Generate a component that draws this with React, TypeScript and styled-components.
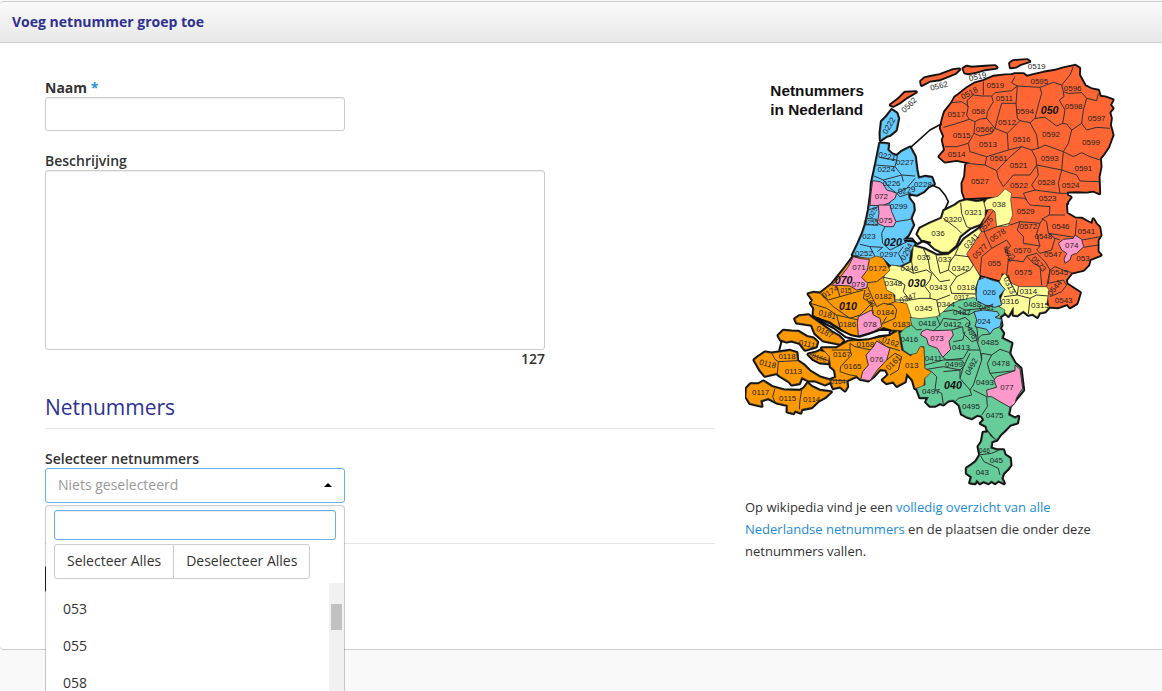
import React from "react";
import styled, { createGlobalStyle } from "styled-components";

const GlobalStyle = createGlobalStyle`
  * { box-sizing: border-box; }
  body {
    margin: 0;
    background: #f9f9f9;
    color: #333;
    font-family: "Open Sans", "Noto Sans", sans-serif;
    font-size: 14px;
    line-height: 20px;
  }
  button, input, textarea { font: inherit; color: inherit; }
`;

const Page = styled.main`
  min-height: 100vh;
  padding-top: 1px;
  overflow: hidden;
`;

const Panel = styled.section`
  min-height: 649px;
  background: #fff;
  border: solid #ccc;
  border-width: 1px 0;
  border-radius: 4px 0 0 4px;
`;

const PanelHeader = styled.header`
  padding: 10px 12px;
  background: linear-gradient(#fafafa, #e8e8e8);
  border-bottom: 1px solid #ccc;
  border-radius: 4px 0 0 0;
`;

const PanelTitle = styled.h1`
  margin: 0;
  font-size: 14px;
  line-height: 20px;
  font-weight: 700;
  color: #2e3192;
`;

const PanelBody = styled.div`
  display: grid;
  grid-template-columns: minmax(0, 670fr) minmax(0, 370fr);
  gap: 30px;
  padding: 11px 47px 0 45px;
`;

const Form = styled.form`
  padding-top: 24px;
`;

const Field = styled.div<{ $gap?: number }>`
  position: relative;
  display: flex;
  flex-direction: column;
  align-items: flex-start;
  margin-bottom: ${(p) => p.$gap ?? 0}px;
`;

const Label = styled.label<{ $strong?: boolean }>`
  height: 19px;
  font-weight: ${(p) => (p.$strong ? 700 : 600)};
`;

const Required = styled.span`
  color: #1c94e0;
`;

const TextInput = styled.input<{ $focused?: boolean }>`
  display: block;
  width: 100%;
  max-width: 300px;
  height: ${(p) => (p.$focused ? 30 : 34)}px;
  padding: 4px 12px;
  background: #fff;
  border: 1px solid ${(p) => (p.$focused ? "#66afe9" : "#ccc")};
  border-radius: 3px;
  box-shadow: inset 0 1px 1px rgba(0, 0, 0, 0.075);
  outline: none;
`;

const TextArea = styled.textarea`
  display: block;
  width: 100%;
  max-width: 500px;
  height: 180px;
  padding: 6px 12px;
  border: 1px solid #ccc;
  border-radius: 3px;
  box-shadow: inset 0 1px 1px rgba(0, 0, 0, 0.075);
  resize: none;
  outline: none;
`;

const Counter = styled.output`
  width: 100%;
  max-width: 500px;
  line-height: 18px;
  text-align: right;
  font-weight: 600;
`;

const SectionTitle = styled.h2`
  margin: 0 0 20px;
  padding-bottom: 7px;
  border-bottom: 1px solid #e5e5e5;
  font-size: 21px;
  line-height: 28px;
  font-weight: 400;
  color: #2e3192;
`;

const Picker = styled.button`
  display: flex;
  align-items: center;
  justify-content: space-between;
  width: 100%;
  max-width: 300px;
  height: 35px;
  padding: 0 12px 2px;
  background: #fff;
  border: 1px solid #66afe9;
  border-radius: 3px;
  color: #999;
  text-align: left;
`;

const Caret = styled.span`
  border: 4px solid transparent;
  border-top: 0;
  border-bottom-color: #000;
`;

const Menu = styled.div`
  position: absolute;
  top: 100%;
  left: 0;
  z-index: 2;
  width: 100%;
  max-width: 300px;
  margin-top: 2px;
  padding-top: 4px;
  background: #fff;
  background-clip: padding-box;
  border: 1px solid rgba(0, 0, 0, 0.2);
  border-radius: 4px;
  box-shadow: inset 0 3px 3px rgba(0, 0, 0, 0.04);
`;

const MenuTools = styled.div`
  padding: 0 8px 4px;
`;

const ButtonGroup = styled.div`
  display: flex;
  margin-top: 4px;
`;

const GroupButton = styled.button`
  height: 35px;
  padding: 0 12px 2px;
  background: #fff;
  border: 1px solid #ccc;
  &:first-child { border-radius: 3px 0 0 3px; }
  &:last-child { margin-left: -1px; border-radius: 0 3px 3px 0; }
`;

const ListArea = styled.div`
  display: flex;
`;

const Options = styled.ul`
  flex: 1;
  margin: 0;
  padding: 7px 0;
  list-style: none;
`;

const Option = styled.li`
  padding: 9px 17px 8px;
`;

const Track = styled.div`
  width: 15px;
  padding: 21px 2px;
  background: #f1f1f1;
`;

const Thumb = styled.div`
  height: 26px;
  background: #c1c1c1;
`;

const Divider = styled.hr`
  width: 100%;
  margin: 40px 0 21px;
  border: 0;
  border-top: 1px solid #e5e5e5;
`;

const SubmitButton = styled.button`
  height: 28px;
  padding: 0 12px;
  background: #1b1464;
  border: 1px solid #1b1464;
  border-radius: 3px;
  color: #fff;
`;

const Aside = styled.aside`
  min-width: 0;
`;

const Map = styled.svg`
  display: block;
  width: 100%;
  height: auto;
`;

const Note = styled.p`
  margin: 8px 0 0;
  font-size: 13px;
  line-height: 22px;
`;

const Link = styled.a`
  color: #1c8bd6;
  text-decoration: none;
`;

const RED = "#ff6633";
const BLUE = "#66ccff";
const PINK = "#ff99cc";
const YELLOW = "#ffff99";
const ORANGE = "#ff9900";
const GREEN = "#66cc99";

type Sheet = {
  x: number;
  y: number;
  land: [string, string][];
  zones: [string, string][];
  borders: string;
  labels: [string, number, number, number?][];
  hubs?: [string, number, number][];
};

// Each sheet covers one part of the country, with its own origin.
const sheets: Sheet[] = [
  {
    // Noord-Holland and the western Wadden islands
    x: 0,
    y: 0,
    land: [
      [BLUE, "420,280 445,282 443,300 455,312 470,318 485,305 510,292 525,320 530,360 535,385 555,380 575,383 582,402 565,410 550,425 530,435 505,430 507,445 520,462 522,480 512,505 520,525 505,555 490,568 515,568 525,580 512,605 508,635 480,648 450,645 430,625 410,620 388,628 338,615 355,580 368,550 378,520 386,480 393,430 395,400 408,340"],
      [BLUE, "455,180 470,190 475,205 468,240 450,255 440,258 422,270 421,250 425,215 440,200"],
      [RED, "452,165 475,148 495,128 528,126 500,142 480,157 460,168"],
      [RED, "545,105 543,94 555,84 575,80 600,75 640,60 658,58 645,70 600,88 570,92"],
    ],
    zones: [
      [PINK, "398,392 420,395 430,402 440,420 458,425 470,430 465,445 445,460 425,467 390,466 393,430"],
      [PINK, "415,465 450,465 455,485 468,515 460,530 435,530 412,520 417,490"],
    ],
    borders:
      "M418 322L470 330L472 318M408 345L465 350L470 330M465 350L485 375L525 378M402 378L430 390L485 375L490 395M430 390L445 410L470 430L500 415L525 385M470 430L480 440L505 432M447 462L460 440M385 480L415 470M378 505L412 508M376 524L415 526M468 515L512 508M435 530L425 550L428 580L450 600L512 570M360 583L390 590L428 592M390 590L405 620M428 592L412 605M490 640L475 610L490 590",
    labels: [
      ["0222", 447, 227, -60], ["0562", 507, 165, -45], ["0562", 597, 108, -14], ["0227", 495, 338],
      ["0221", 441, 320, 14], ["0224", 439, 358], ["0226", 455, 401], ["0228", 549, 402],
      ["0229", 500, 421, -10], ["072", 424, 440], ["0299", 476, 469], ["025", 398, 487, -60],
      ["0255", 393, 516], ["075", 437, 511], ["023", 387, 560], ["0252", 372, 609], ["0297", 446, 612], ["0294", 500, 605, -62],
    ],
    hubs: [["020", 459, 577]],
  },
  {
    // Friesland, Groningen and Drenthe
    x: 570,
    y: 0,
    land: [
      [RED, "35,220 40,200 45,185 65,160 75,142 85,135 110,115 135,100 160,93 190,80 225,76 245,75 255,72 280,72 290,80 310,75 340,68 375,62 400,55 435,47 448,55 447,75 465,108 485,118 505,122 510,140 525,142 548,150 540,165 548,175 538,187 543,205 540,225 548,255 535,290 522,310 510,325 512,350 506,380 508,430 490,422 470,425 440,424 410,425 412,460 235,450 205,440 105,445 98,425 97,400 105,380 108,345 120,338 80,330 45,335 28,320 45,300 38,270 42,258 32,235"],
      [RED, "100,56 110,50 125,53 165,50 195,48 200,53 165,58 140,65 118,70 105,68"],
      [RED, "240,40 250,33 290,30 298,34 270,43 258,50 242,52"],
    ],
    zones: [],
    borders:
      "M65 158L95 155L115 168L110 195L118 208L75 222L40 232M112 170L112 150L130 135L155 138L185 138L195 128L245 122L262 108L245 98L255 80M160 95L160 135M185 138L190 155L172 185L170 205L195 235M118 208L135 215L150 207L170 205M135 215L132 250L150 258L185 250L195 235M132 250L115 280L80 290L45 290M115 280L120 305L170 320L235 300L232 250L195 235M262 108L258 160L215 160L205 195L195 235M258 160L262 205L270 212L232 250M262 108L330 112L335 130L325 165L315 205L300 218L270 212M330 112L370 97L395 105L420 75L430 50M395 105L400 125L415 130L455 128L470 145L500 152L505 130M400 125L402 140L388 150L405 180L398 220L380 228L345 202L315 205M470 145L460 180L455 220L425 240L410 222L398 220M455 220L470 240L500 232L540 235M425 240L415 280L400 305L345 285L325 295L320 255L300 218M400 305L430 320L455 308L480 320L510 330M235 300L275 290L305 300L325 295M305 300L318 325L320 345L300 375L250 375L220 410L205 385L200 362L165 345L170 320M200 362L235 325L275 290M165 345L108 340M320 345L395 360L400 305M395 360L385 400L390 430M395 360L440 375L450 393L508 395M320 345L325 375L305 405L315 420L280 430L290 450M315 420L390 430L412 430",
    labels: [
      ["0519", 143, 80, -12], ["0519", 320, 48], ["0519", 196, 107], ["0518", 118, 130, -28],
      ["0595", 328, 95], ["0596", 428, 114], ["0511", 223, 146], ["058", 145, 184], ["0517", 79, 193],
      ["0594", 285, 184], ["0598", 431, 168], ["0597", 500, 204], ["0512", 231, 216], ["0566", 164, 237],
      ["0515", 95, 256], ["0513", 174, 283], ["0516", 275, 267], ["0592", 363, 252], ["0599", 483, 276],
      ["0514", 80, 313], ["0561", 206, 325], ["0521", 266, 345], ["0593", 359, 324], ["0591", 460, 355],
      ["0527", 150, 395], ["0522", 267, 405], ["0528", 349, 397], ["0524", 422, 405],
    ],
    hubs: [["050", 359, 181]],
  },
  {
    // Overijssel, Gelderland, Flevoland and Utrecht
    x: 570,
    y: 420,
    land: [
      [RED, "235,-20 410,0 410,15 422,22 408,40 410,70 435,85 455,86 475,97 487,102 490,88 498,102 508,112 512,135 503,150 503,185 512,195 480,208 475,225 460,240 425,248 408,270 410,282 450,308 445,325 440,340 420,352 412,342 385,352 357,350 350,290 268,290 245,280 232,255 215,250 213,272 175,262 150,255 108,192 130,165 150,118 175,60 240,0"],
      [YELLOW, "162,40 170,28 205,18 215,8 225,-4 245,10 242,30 248,75 240,95 235,108 200,110 195,65 185,58 168,60"],
      [YELLOW, "-38,132 -30,115 0,100 35,85 42,62 75,46 90,35 110,30 140,35 160,32 166,55 165,80 150,103 120,114 90,138 78,166 55,186 35,186 15,176 -5,158 -25,150"],
      [YELLOW, "-50,168 -20,176 0,186 20,196 55,194 88,168 102,148 150,114 155,124 110,192 150,258 136,295 140,328 90,330 60,345 30,392 -55,390 -65,370 -85,345 -105,335 -105,315 -125,305 -145,290 -140,265 -130,240 -115,225 -85,230 -55,215"],
      [YELLOW, "225,250 245,280 268,290 350,290 357,300 350,345 360,348 345,365 328,368 322,381 308,372 295,375 280,363 262,376 250,375 250,352 235,378 222,365 205,345 222,300 208,275 215,258"],
    ],
    zones: [
      [BLUE, "140,290 145,270 165,262 190,272 205,275 225,298 208,318 215,345 195,352 165,345 140,332 138,315"],
      [PINK, "385,160 400,148 430,145 435,135 455,148 461,170 440,190 425,195 420,210 405,220 402,208 410,190 395,180"],
    ],
    borders:
      "M245 22L285 25L300 45L360 50L358 75L405 75M358 75L340 85L330 100L270 95L240 105M270 95L262 120L280 140L280 160L330 168L320 130L330 100M335 85L350 95L355 130L375 145L390 150M355 130L435 142L440 90M455 150L512 140M460 172L505 165M375 145L365 180L330 190L320 180L330 168M162 125L200 110L240 100M162 125L185 175L230 150L242 168L230 180L240 215M185 175L155 200L150 255M240 192L225 185L230 170M240 215L255 200L245 190M235 210L230 255M235 210L280 215L290 198L320 190L345 215L360 240L350 290M290 198L310 220L330 230L335 285M360 240L375 230L400 240L425 248M360 240L355 280L400 270M400 270L410 285L395 305L360 320M150 115L190 62M40 85L60 100L80 115L95 130M92 38L95 70L110 110L120 114M85 172L75 195L60 215L55 240L30 250L18 196M75 195L115 200L130 225L120 240L80 260L55 240M80 260L60 290L65 310L140 312M-140 262L-100 270L-75 285L-80 305L-60 330L-30 325L0 325L20 330L60 315M20 330L30 380M-20 176L-5 210L0 240L30 275L60 270M-85 230L-50 250L-10 240L5 250L0 270L-15 290L0 310L0 325M-55 215L-50 250M265 290L262 315L222 320M262 315L300 325L320 315L355 318M300 325L295 372M-105 330L-60 330M235 255L240 275L262 315",
    labels: [
      ["038", 207, 44], ["0523", 353, 24], ["0529", 287, 64], ["0321", 130, 68], ["0320", 69, 88],
      ["036", 24, 130], ["0525", 168, 104, -52], ["0572", 295, 109], ["0546", 392, 109], ["0541", 469, 125],
      ["0548", 340, 139], ["0578", 203, 136, -35], ["0341", 124, 153, -45], ["0577", 150, 184, -45],
      ["0570", 277, 180], ["074", 425, 166], ["0547", 369, 192], ["053", 459, 205], ["033", 44, 207],
      ["0342", 92, 234], ["055", 193, 221], ["0573", 326, 222, 48], ["0575", 280, 246], ["0545", 388, 246],
      ["0313", 238, 286, 65], ["0544", 374, 294, -50], ["0343", 25, 291], ["0318", 108, 293], ["0317", 94, 321], ["026", 178, 308],
      ["0314", 295, 304], ["0543", 401, 331], ["0316", 240, 335], ["0315", 330, 346], ["0344", 48, 343],
      ["035", -19, 202], ["0346", -62, 235], ["0348", -110, 280], ["0347", -66, 324, -20], ["0345", -19, 355],
      ["0571", 235, 190, 70],
    ],
    hubs: [["030", -40, 280]],
  },
  {
    // Zuid-Holland
    x: 0,
    y: 420,
    land: [
      [ORANGE, "205,312 220,308 240,310 275,283 310,240 340,200 390,205 410,198 430,205 450,240 430,260 440,300 460,310 465,335 500,340 515,385 515,410 495,422 455,420 430,412 410,422 380,430 355,440 330,435 300,415 270,395 235,385 220,375 222,355 212,340 218,330"],
      [ORANGE, "165,387 178,378 205,375 222,388 242,402 275,426 296,438 310,452 300,462 250,452 225,430 215,405 195,402 170,398"],
    ],
    zones: [
      [PINK, "340,200 362,206 388,208 382,240 365,262 383,280 380,294 350,300 330,288 275,285 300,262 325,230"],
      [PINK, "355,380 385,365 395,360 400,375 420,385 425,410 400,425 355,438 352,400"],
    ],
    borders:
      "M325 230L330 250L365 245M382 278L410 275L430 260M240 310L280 350L330 385L360 375L395 340L370 325L375 300M245 310L265 330L300 320L290 288M300 320L370 300M383 290L400 330L410 350L430 340L460 345L470 360L465 385L430 400M395 340L400 370M212 340L260 355L290 375L300 415M290 375L355 390M465 335L440 345M440 380L425 405",
    labels: [
      ["071", 357, 232], ["0172", 413, 234], ["079", 355, 284], ["0174", 270, 306, -30], ["015", 318, 302],
      ["0182", 430, 319], ["0180", 390, 330, 65], ["0184", 436, 367], ["0181", 262, 374, 14],
      ["0186", 322, 403], ["078", 390, 403], ["0183", 484, 403], ["0187", 254, 426, 28],
    ],
    hubs: [["070", 311, 270], ["010", 324, 349]],
  },
  {
    // Zeeland and western Brabant
    x: 0,
    y: 810,
    land: [
      [ORANGE, "115,47 130,32 155,34 175,35 200,50 220,55 232,66 228,80 195,90 180,70 155,62 140,65 122,60"],
      [ORANGE, "43,120 55,110 75,97 95,100 150,92 170,98 172,122 190,134 210,154 240,172 268,180 272,186 255,194 225,182 205,182 185,172 178,190 155,194 148,185 120,168 110,160 75,168 60,150"],
      [ORANGE, "20,205 32,192 55,192 70,184 95,200 130,210 180,212 192,205 203,190 215,200 240,212 273,216 255,232 235,243 215,262 185,268 182,278 165,272 160,280 142,275 143,256 110,248 85,235 62,242 65,258 30,250 18,230"],
      [ORANGE, "205,103 230,97 240,92 256,96 268,110 265,130 240,128 220,118"],
      [ORANGE, "245,84 290,84 325,64 400,56 430,50 450,46 475,32 485,90 512,108 535,78 552,82 555,145 580,158 555,175 550,205 525,205 518,180 500,160 495,185 470,198 460,185 440,190 428,180 445,165 438,150 420,148 400,170 385,182 360,177 350,168 320,182 322,200 315,212 300,200 280,205 270,180 288,172 284,150 272,140 268,110"],
    ],
    zones: [[PINK, "410,63 430,75 450,85 440,120 412,150 390,182 362,178 368,155 385,135 378,105 400,80"]],
    borders:
      "M95 100L105 118L115 125L172 122M115 125L112 162M105 205L98 230L105 246M185 210L180 240L178 268M275 90L330 90L335 105L320 120L302 140L300 155L330 165L350 168M330 90L330 70L345 80L395 90M415 60L440 80L480 92M440 120L465 100L485 110L475 150L450 165M270 180L320 182M210 103L265 122",
    labels: [
      ["0111", 201, 72, 12], ["0118", 141, 109], ["0118", 83, 132, 14], ["0113", 160, 153], ["0117", 62, 217],
      ["0115", 143, 234], ["0114", 215, 239], ["0166", 238, 112, 18], ["0167", 306, 103], ["0168", 376, 74],
      ["0162", 452, 66, 18], ["0165", 338, 139], ["076", 410, 117], ["0161", 460, 128, -45], ["013", 515, 136], ["0164", 294, 185],
    ],
  },
  {
    // Brabant and Limburg
    x: 480,
    y: 780,
    land: [
      [GREEN, "30,22 60,26 110,20 130,5 150,-15 175,-28 220,-38 250,-22 280,-20 315,0 312,12 300,20 305,45 300,55 310,70 305,85 335,100 328,130 345,160 362,175 370,240 352,262 330,290 325,315 345,325 355,320 352,338 330,345 318,358 300,375 290,390 280,382 262,360 258,348 242,340 252,330 245,318 232,315 215,325 200,320 185,312 178,285 160,270 145,272 130,284 120,280 105,288 90,288 78,276 85,262 60,262 50,235 75,225 75,205 95,185 75,175 72,110 60,110 50,130 30,134 10,120 0,70 15,55 35,45"],
      [GREEN, "250,368 265,366 272,378 288,390 275,395 272,415 290,420 310,420 315,435 330,445 332,465 325,475 310,490 305,505 312,520 295,512 285,520 275,513 265,520 250,514 240,520 230,510 225,520 210,518 215,500 200,490 200,475 215,465 228,455 240,435 235,410 245,395"],
    ],
    zones: [
      [BLUE, "222,5 250,0 292,5 298,15 285,22 305,28 300,50 280,58 270,72 260,58 225,50 230,30"],
      [PINK, "290,200 345,182 345,165 360,178 368,235 350,262 345,280 330,292 300,275 275,260 262,260 260,240 290,232 282,210"],
      [PINK, "65,65 80,58 100,62 155,60 160,75 147,95 152,118 128,142 112,115 85,105 80,85 62,75"],
    ],
    borders:
      "M35 45L50 60L65 58M110 20L120 45L100 62M120 45L130 25L175 30L195 22L210 35L205 50L225 70L230 90L215 95L190 70L188 50L155 60M175 -10L195 0L250 -5L280 -18M130 5L160 0L205 15L225 5M230 90L245 75L270 72M230 90L240 120L205 120L190 145L140 150L128 142M230 50L235 95M160 95L188 90L195 65M75 165L130 150L185 150L195 165L180 180L130 170L80 178M95 185L110 200L105 240L125 250L130 282M130 185L180 180L180 205L210 240L215 255L175 265L165 275M210 240L220 225L245 150L240 120M180 205L190 170L210 130M245 150L245 130L275 135L300 118L335 130M275 135L262 160L270 190L345 182M270 190L285 210M220 240L260 260L262 290L245 315M235 435L275 430L298 420M242 438L252 455L295 475L300 495",
    labels: [
      ["0488", 217, -18], ["0481", 260, -8], ["0487", 186, 7], ["0418", 82, 40], ["0412", 158, 43],
      ["024", 252, 34], ["0486", 212, 62, 62], ["0416", 28, 88], ["073", 111, 86], ["0485", 270, 98],
      ["0413", 183, 111], ["0411", 100, 144], ["0499", 162, 162], ["0492", 214, 170, -62], ["0478", 303, 159],
      ["0493", 255, 217], ["077", 321, 231], ["0497", 93, 244], ["0495", 213, 289], ["0475", 284, 317],
      ["046", 253, 421], ["045", 289, 451], ["043", 247, 488],
    ],
    hubs: [["040", 159, 225]],
  },
];

const SMALL = new Set(["0255", "025", "0317", "0481", "0571", "046", "0164", "0166", "0180", "015"]);

function NetnummerMap() {
  const at = (s: Sheet) => `translate(${s.x} ${s.y})`;
  return (
    <Map viewBox="15 12 1110 1302" role="img" aria-label="Netnummers in Nederland">
      <g fill="#111" stroke="#111" strokeWidth="11" strokeLinejoin="round">
        {sheets.map((s, i) => (
          <g key={i} transform={at(s)}>
            {s.land.map(([, points], j) => <polygon key={j} points={points} />)}
          </g>
        ))}
      </g>
      {sheets.map((s, i) => (
        <g key={i} transform={at(s)}>
          {s.land.map(([fill, points], j) => (
            <polygon key={j} points={points} fill={fill} stroke={fill === RED ? "none" : "#333"} strokeWidth="2" />
          ))}
        </g>
      ))}
      {sheets.map((s, i) => (
        <g key={i} transform={at(s)} stroke="#333" strokeWidth="3" strokeLinejoin="round">
          <path d={s.borders} fill="none" />
          {s.zones.map(([fill, points], j) => <polygon key={j} points={points} fill={fill} />)}
        </g>
      ))}
      {/* dykes and the water between the delta islands */}
      <g fill="none" stroke="#111" strokeLinejoin="round" strokeLinecap="round">
        <path strokeWidth="5" d="M512 292L570 240L604 222M582 408L598 415L615 435L625 455L615 478" />
        <path strokeWidth="6" d="M495 572L520 574L533 582L550 573L570 578M125 872L118 900" />
        <path
          fill="#fff"
          strokeWidth="6"
          d="M232 804L270 820L305 842L335 856L358 860L385 852L418 840L449 840L449 855L415 859L385 868L355 870L318 862L280 834L245 816Z"
        />
      </g>
      <g fontFamily='"Liberation Sans", Arial, sans-serif' textAnchor="middle" fill="#222">
        {sheets.map((s, i) => (
          <g key={i} transform={at(s)}>
            {s.labels.map(([text, x, y, turn], j) => (
              <text key={j} transform={`translate(${x} ${y}) rotate(${turn ?? 0})`} y="8" fontSize={SMALL.has(text) ? 20 : 24}>
                {text}
              </text>
            ))}
            {s.hubs?.map(([text, x, y]) => (
              <text key={text} x={x} y={y + 11} fontSize="32" fontWeight="700" fontStyle="italic" fill="#111">
                {text}
              </text>
            ))}
          </g>
        ))}
      </g>
      <g fontFamily='"Liberation Sans", Arial, sans-serif' fontWeight="700" fontSize="46" fill="#111">
        <text x="91" y="138">Netnummers</text>
        <text x="91" y="195">in Nederland</text>
      </g>
    </Map>
  );
}

export default function App() {
  return (
    <>
      <GlobalStyle />
      <Page>
        <Panel>
          <PanelHeader>
            <PanelTitle>Voeg netnummer groep toe</PanelTitle>
          </PanelHeader>
          <PanelBody>
            <Form onSubmit={(e) => e.preventDefault()}>
              <Field $gap={20}>
                <Label htmlFor="naam" $strong>
                  Naam <Required>*</Required>
                </Label>
                <TextInput id="naam" type="text" required />
              </Field>
              <Field $gap={25}>
                <Label htmlFor="beschrijving">Beschrijving</Label>
                <TextArea id="beschrijving" maxLength={127} />
                <Counter htmlFor="beschrijving">127</Counter>
              </Field>
              <SectionTitle>Netnummers</SectionTitle>
              <Field>
                <Label htmlFor="netnummers">Selecteer netnummers</Label>
                <Picker id="netnummers" type="button" aria-haspopup="listbox" aria-expanded="true">
                  Niets geselecteerd
                  <Caret />
                </Picker>
                <Menu>
                  <MenuTools>
                    <TextInput type="text" aria-label="Zoeken" $focused />
                    <ButtonGroup>
                      <GroupButton type="button">Selecteer Alles</GroupButton>
                      <GroupButton type="button">Deselecteer Alles</GroupButton>
                    </ButtonGroup>
                  </MenuTools>
                  <ListArea>
                    <Options role="listbox" aria-label="Netnummers">
                      {["053", "055", "058"].map((n) => (
                        <Option key={n} role="option" aria-selected="false">{n}</Option>
                      ))}
                    </Options>
                    <Track>
                      <Thumb />
                    </Track>
                  </ListArea>
                </Menu>
              </Field>
              <Divider />
              <SubmitButton type="submit" aria-label="Opslaan" />
            </Form>
            <Aside>
              <NetnummerMap />
              <Note>
                Op wikipedia vind je een{" "}
                <Link href="#netnummers">volledig overzicht van alle Nederlandse netnummers</Link> en de
                plaatsen die onder deze netnummers vallen.
              </Note>
            </Aside>
          </PanelBody>
        </Panel>
      </Page>
    </>
  );
}
